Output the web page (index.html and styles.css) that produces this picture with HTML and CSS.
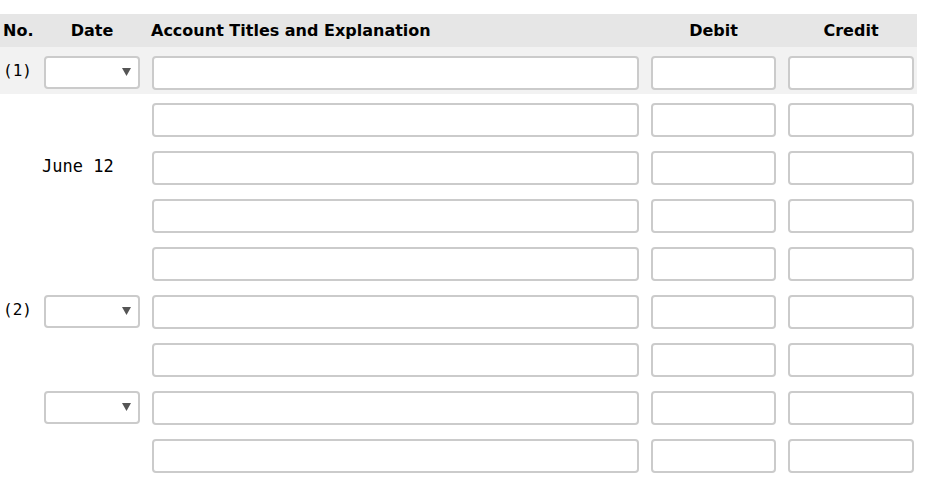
FILE: index.html
```html
<!DOCTYPE html>
<html lang="en">
<head>
<meta charset="utf-8">
<title>Journal entries</title>
<link rel="stylesheet" href="styles.css">
</head>
<body>
<div class="journal">
  <div class="row head">
    <div class="cell no">No.</div>
    <div class="cell date center">Date</div>
    <div class="cell acct">Account Titles and Explanation</div>
    <div class="cell debit center">Debit</div>
    <div class="cell credit center">Credit</div>
  </div>

  <div class="row shaded">
    <div class="cell no label">(1)</div>
    <div class="cell date"><div class="sel"><select aria-label="Date"><option></option></select><svg class="arrow" width="9" height="8" viewBox="0 0 9 8"><path d="M0 0H9L4.5 8Z"/></svg></div></div>
    <div class="cell acct"><input type="text"></div>
    <div class="cell debit"><input type="text"></div>
    <div class="cell credit"><input type="text"></div>
  </div>

  <div class="row">
    <div class="cell no"></div>
    <div class="cell date"></div>
    <div class="cell acct"><input type="text"></div>
    <div class="cell debit"><input type="text"></div>
    <div class="cell credit"><input type="text"></div>
  </div>

  <div class="row">
    <div class="cell no"></div>
    <div class="cell date label june">June 12</div>
    <div class="cell acct"><input type="text"></div>
    <div class="cell debit"><input type="text"></div>
    <div class="cell credit"><input type="text"></div>
  </div>

  <div class="row">
    <div class="cell no"></div>
    <div class="cell date"></div>
    <div class="cell acct"><input type="text"></div>
    <div class="cell debit"><input type="text"></div>
    <div class="cell credit"><input type="text"></div>
  </div>

  <div class="row">
    <div class="cell no"></div>
    <div class="cell date"></div>
    <div class="cell acct"><input type="text"></div>
    <div class="cell debit"><input type="text"></div>
    <div class="cell credit"><input type="text"></div>
  </div>

  <div class="row">
    <div class="cell no label">(2)</div>
    <div class="cell date"><div class="sel"><select aria-label="Date"><option></option></select><svg class="arrow" width="9" height="8" viewBox="0 0 9 8"><path d="M0 0H9L4.5 8Z"/></svg></div></div>
    <div class="cell acct"><input type="text"></div>
    <div class="cell debit"><input type="text"></div>
    <div class="cell credit"><input type="text"></div>
  </div>

  <div class="row">
    <div class="cell no"></div>
    <div class="cell date"></div>
    <div class="cell acct"><input type="text"></div>
    <div class="cell debit"><input type="text"></div>
    <div class="cell credit"><input type="text"></div>
  </div>

  <div class="row">
    <div class="cell no"></div>
    <div class="cell date"><div class="sel"><select aria-label="Date"><option></option></select><svg class="arrow" width="9" height="8" viewBox="0 0 9 8"><path d="M0 0H9L4.5 8Z"/></svg></div></div>
    <div class="cell acct"><input type="text"></div>
    <div class="cell debit"><input type="text"></div>
    <div class="cell credit"><input type="text"></div>
  </div>

  <div class="row">
    <div class="cell no"></div>
    <div class="cell date"></div>
    <div class="cell acct"><input type="text"></div>
    <div class="cell debit"><input type="text"></div>
    <div class="cell credit"><input type="text"></div>
  </div>
</div>
</body>
</html>
```

FILE: styles.css
```css
html, body {
  margin: 0;
  padding: 0;
  background: #ffffff;
}

body {
  font-family: "DejaVu Sans", Verdana, sans-serif;
  color: #000;
}

.journal {
  width: 917px;
  padding-top: 14px;
}

.row {
  display: grid;
  grid-template-columns: 38px 108px 499px 137px 135px;
  height: 48px;
}

.row.head {
  height: 33px;
  background: #e6e6e6;
  font-weight: bold;
  font-size: 16px;
  align-items: center;
}

.row.shaded {
  height: 47px;
  background: #f2f2f2;
}

.cell {
  padding: 9px 6px 0 6px;
  box-sizing: border-box;
}

.head .cell {
  padding-top: 0;
}

.cell.no {
  padding-left: 3px;
  padding-right: 0;
}

.head .cell.acct {
  padding-left: 5px;
}

.cell.credit {
  padding-right: 3px;
}

.center {
  text-align: center;
}

.label {
  font-family: "DejaVu Sans Mono", "Liberation Mono", monospace;
  font-size: 16px;
  line-height: 30px;
}

.label.june {
  font-size: 17px;
  padding-left: 4px;
  padding-top: 9px;
  line-height: 30px;
}

input, select {
  display: block;
  width: 100%;
  height: 34px;
  box-sizing: border-box;
  border: 2px solid #cbcbcb;
  border-radius: 4px;
  background: #ffffff;
  margin: 0;
  padding: 0 6px;
  font: inherit;
  outline: none;
}

.sel {
  position: relative;
}

select {
  -webkit-appearance: none;
  appearance: none;
  height: 33px;
}

.arrow {
  position: absolute;
  right: 9px;
  top: 12px;
  fill: #555555;
  pointer-events: none;
}
```
